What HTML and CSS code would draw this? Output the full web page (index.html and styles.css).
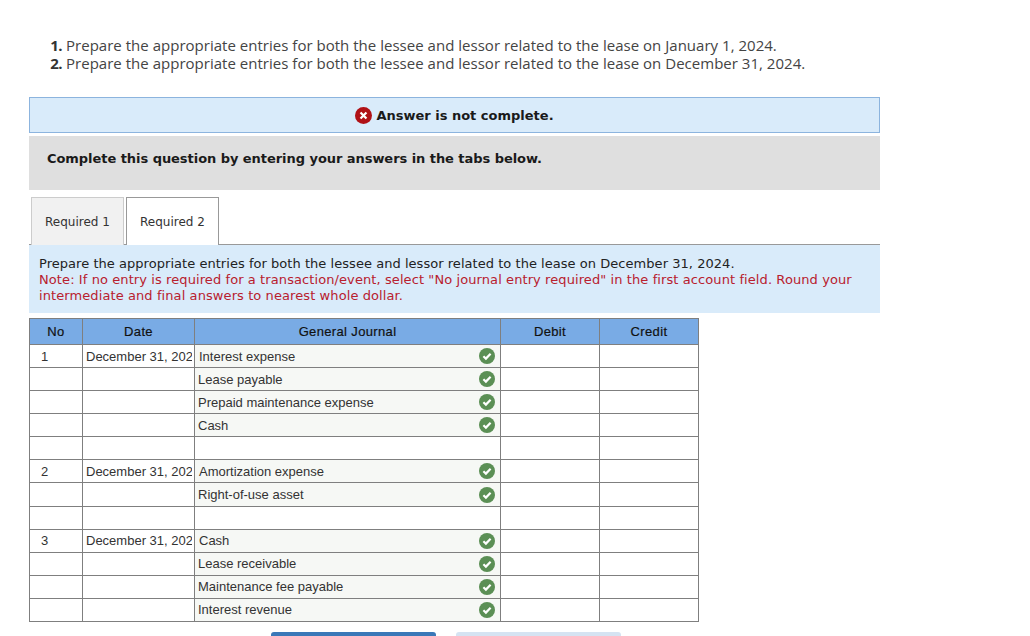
FILE: index.html
```html
<!DOCTYPE html>
<html lang="en">
<head>
<meta charset="utf-8">
<title>Lease entries</title>
<link rel="stylesheet" href="styles.css">
</head>
<body>
<svg class="defs" width="0" height="0" aria-hidden="true">
  <symbol id="ok" viewBox="0 0 16 16">
    <circle cx="8" cy="8" r="8" fill="#5b8f55"/>
    <path d="M4.4 8.3 L6.9 10.6 L11.6 5.8" fill="none" stroke="#fff" stroke-width="2.2"/>
  </symbol>
</svg>
<main class="page">
  <ol class="tasks">
    <li class="task"><b class="num">1.</b><span>Prepare the appropriate entries for both the lessee and lessor related to the lease on January 1, 2024.</span></li>
    <li class="task"><b class="num">2.</b><span>Prepare the appropriate entries for both the lessee and lessor related to the lease on December 31, 2024.</span></li>
  </ol>
  <div class="banner">
    <svg class="err" viewBox="0 0 16 16" width="17" height="17" aria-hidden="true">
      <circle cx="8" cy="8" r="8" fill="#b01116"/>
      <path d="M5.2 5.2 L10.8 10.8 M10.8 5.2 L5.2 10.8" stroke="#fff" stroke-width="2.1"/>
    </svg>
    <span>Answer is not complete.</span>
  </div>
  <div class="prompt">Complete this question by entering your answers in the tabs below.</div>
  <div class="tabs">
    <div class="tab">Required 1</div>
    <div class="tab active">Required 2</div>
  </div>
  <section class="instructions">
    <p class="lead">Prepare the appropriate entries for both the lessee and lessor related to the lease on December 31, 2024.</p>
    <p class="note">Note: If no entry is required for a transaction/event, select "No journal entry required" in the first account field. Round your intermediate and final answers to nearest whole dollar.</p>
  </section>
  <table class="journal">
    <colgroup>
      <col class="c-no"><col class="c-date"><col class="c-acct"><col class="c-amt"><col class="c-amt">
    </colgroup>
    <thead>
      <tr><th>No</th><th>Date</th><th>General Journal</th><th>Debit</th><th>Credit</th></tr>
    </thead>
    <tbody>
      <tr><td class="no">1</td><td><div class="date">December 31, 2024</div></td><td class="acct first"><div class="acct-in"><span>Interest expense</span><svg class="ok"><use href="#ok"/></svg></div></td><td></td><td></td></tr>
      <tr><td></td><td></td><td class="acct"><div class="acct-in"><span>Lease payable</span><svg class="ok"><use href="#ok"/></svg></div></td><td></td><td></td></tr>
      <tr><td></td><td></td><td class="acct"><div class="acct-in"><span>Prepaid maintenance expense</span><svg class="ok"><use href="#ok"/></svg></div></td><td></td><td></td></tr>
      <tr><td></td><td></td><td class="acct"><div class="acct-in"><span>Cash</span><svg class="ok"><use href="#ok"/></svg></div></td><td></td><td></td></tr>
      <tr><td></td><td></td><td></td><td></td><td></td></tr>
      <tr><td class="no">2</td><td><div class="date">December 31, 2024</div></td><td class="acct first"><div class="acct-in"><span>Amortization expense</span><svg class="ok"><use href="#ok"/></svg></div></td><td></td><td></td></tr>
      <tr class="tall"><td></td><td></td><td class="acct"><div class="acct-in"><span>Right-of-use asset</span><svg class="ok"><use href="#ok"/></svg></div></td><td></td><td></td></tr>
      <tr><td></td><td></td><td></td><td></td><td></td></tr>
    </tbody>
    <tbody class="raised">
      <tr><td class="no">3</td><td><div class="date">December 31, 2024</div></td><td class="acct first"><div class="acct-in"><span>Cash</span><svg class="ok"><use href="#ok"/></svg></div></td><td></td><td></td></tr>
      <tr><td></td><td></td><td class="acct"><div class="acct-in"><span>Lease receivable</span><svg class="ok"><use href="#ok"/></svg></div></td><td></td><td></td></tr>
      <tr><td></td><td></td><td class="acct"><div class="acct-in"><span>Maintenance fee payable</span><svg class="ok"><use href="#ok"/></svg></div></td><td></td><td></td></tr>
      <tr><td></td><td></td><td class="acct"><div class="acct-in"><span>Interest revenue</span><svg class="ok"><use href="#ok"/></svg></div></td><td></td><td></td></tr>
    </tbody>
  </table>
  <div class="actions">
    <div class="btn primary"></div>
    <div class="btn secondary"></div>
  </div>
</main>
</body>
</html>
```
FILE: styles.css
```css
html, body {
  margin: 0;
  height: 636px;
  overflow: hidden;
  background: #fff;
}
.defs { position: absolute; }
.page {
  width: 851px;
  margin-left: 29px;
  padding-top: 36px;
}
.tasks {
  list-style: none;
  margin: 0 0 25px;
  padding: 0;
  font: 15px/18px "Open Sans", "Liberation Sans", sans-serif;
  letter-spacing: 0.02px;
  color: #444;
}
.task {
  display: grid;
  grid-template-columns: 33px 1fr;
  column-gap: 4px;
}
.num { text-align: right; color: #333; letter-spacing: -0.6px; }
.banner {
  box-sizing: border-box;
  height: 36px;
  border: 1px solid #8cb4de;
  background: #d9ebfa;
  display: flex;
  align-items: center;
  justify-content: center;
  gap: 4px;
  font: bold 13px "DejaVu Sans", Verdana, sans-serif;
  color: #1a1a1a;
}
.prompt {
  box-sizing: border-box;
  height: 54px;
  margin-top: 3px;
  padding: 15px 18px 0;
  background: #dfdfdf;
  font: bold 13px/16px "DejaVu Sans", Verdana, sans-serif;
  letter-spacing: -0.05px;
  color: #1a1a1a;
}
.tabs {
  display: flex;
  gap: 2px;
  margin-top: 7px;
  padding-left: 2px;
  height: 48px;
  box-sizing: border-box;
  border-bottom: 1px solid #999;
}
.tab {
  box-sizing: border-box;
  width: 93px;
  height: 48px;
  border: 1px solid #ccc;
  border-bottom: 0;
  background: #f1f1f1;
  display: flex;
  align-items: center;
  justify-content: center;
  font: 12px "DejaVu Sans", Verdana, sans-serif;
  color: #333;
}
.tab.active {
  background: #fff;
  border-color: #999;
}
.instructions {
  box-sizing: border-box;
  height: 68px;
  padding: 11px 10px 0;
  background: #d9ebfa;
  font: 13px/16px "DejaVu Sans", Verdana, sans-serif;
  color: #222;
}
.instructions p { margin: 0; }
.lead { letter-spacing: 0.04px; }
.note { color: #b8202e; letter-spacing: 0.09px; }
.journal {
  margin-top: 5px;
  width: 670px;
  table-layout: fixed;
  border-collapse: collapse;
  font: 13px "Liberation Sans", Arial, sans-serif;
  color: #333;
}
.c-no { width: 53px; }
.c-date { width: 112px; }
.c-acct { width: 306px; }
.c-amt { width: 99px; }
.journal th, .journal td {
  border: 1px solid #7f7f7f;
  padding: 0;
  height: 22px;
}
.journal th {
  height: 25px;
  background: #79abe5;
  font-weight: normal;
  letter-spacing: 0.35px;
  -webkit-text-stroke: 0.2px #111;
  color: #111;
  text-align: center;
}
.journal .tall td { height: 23px; }
.no { text-align: left; padding-left: 11px !important; }
.date {
  width: 106px;
  overflow: hidden;
  white-space: nowrap;
  padding-left: 3px;
}
.acct { background: #f6f8f5; }
.acct-in {
  display: flex;
  align-items: center;
  justify-content: space-between;
  padding: 0 5px 0 3px;
}
.first .acct-in { padding-left: 4px; }
.ok { width: 16px; height: 16px; display: block; }
.raised .acct-in span,
.raised .date { margin-bottom: 2px; }
.raised .no { padding-bottom: 2px !important; height: 20px !important; }
.actions {
  display: flex;
  gap: 20px;
  margin: 10px 0 0 242px;
}
.btn {
  width: 165px;
  height: 40px;
  border-radius: 3px 3px 0 0;
}
.primary { background: #3a78b8; }
.secondary { background: #d5e3f2; }
```
